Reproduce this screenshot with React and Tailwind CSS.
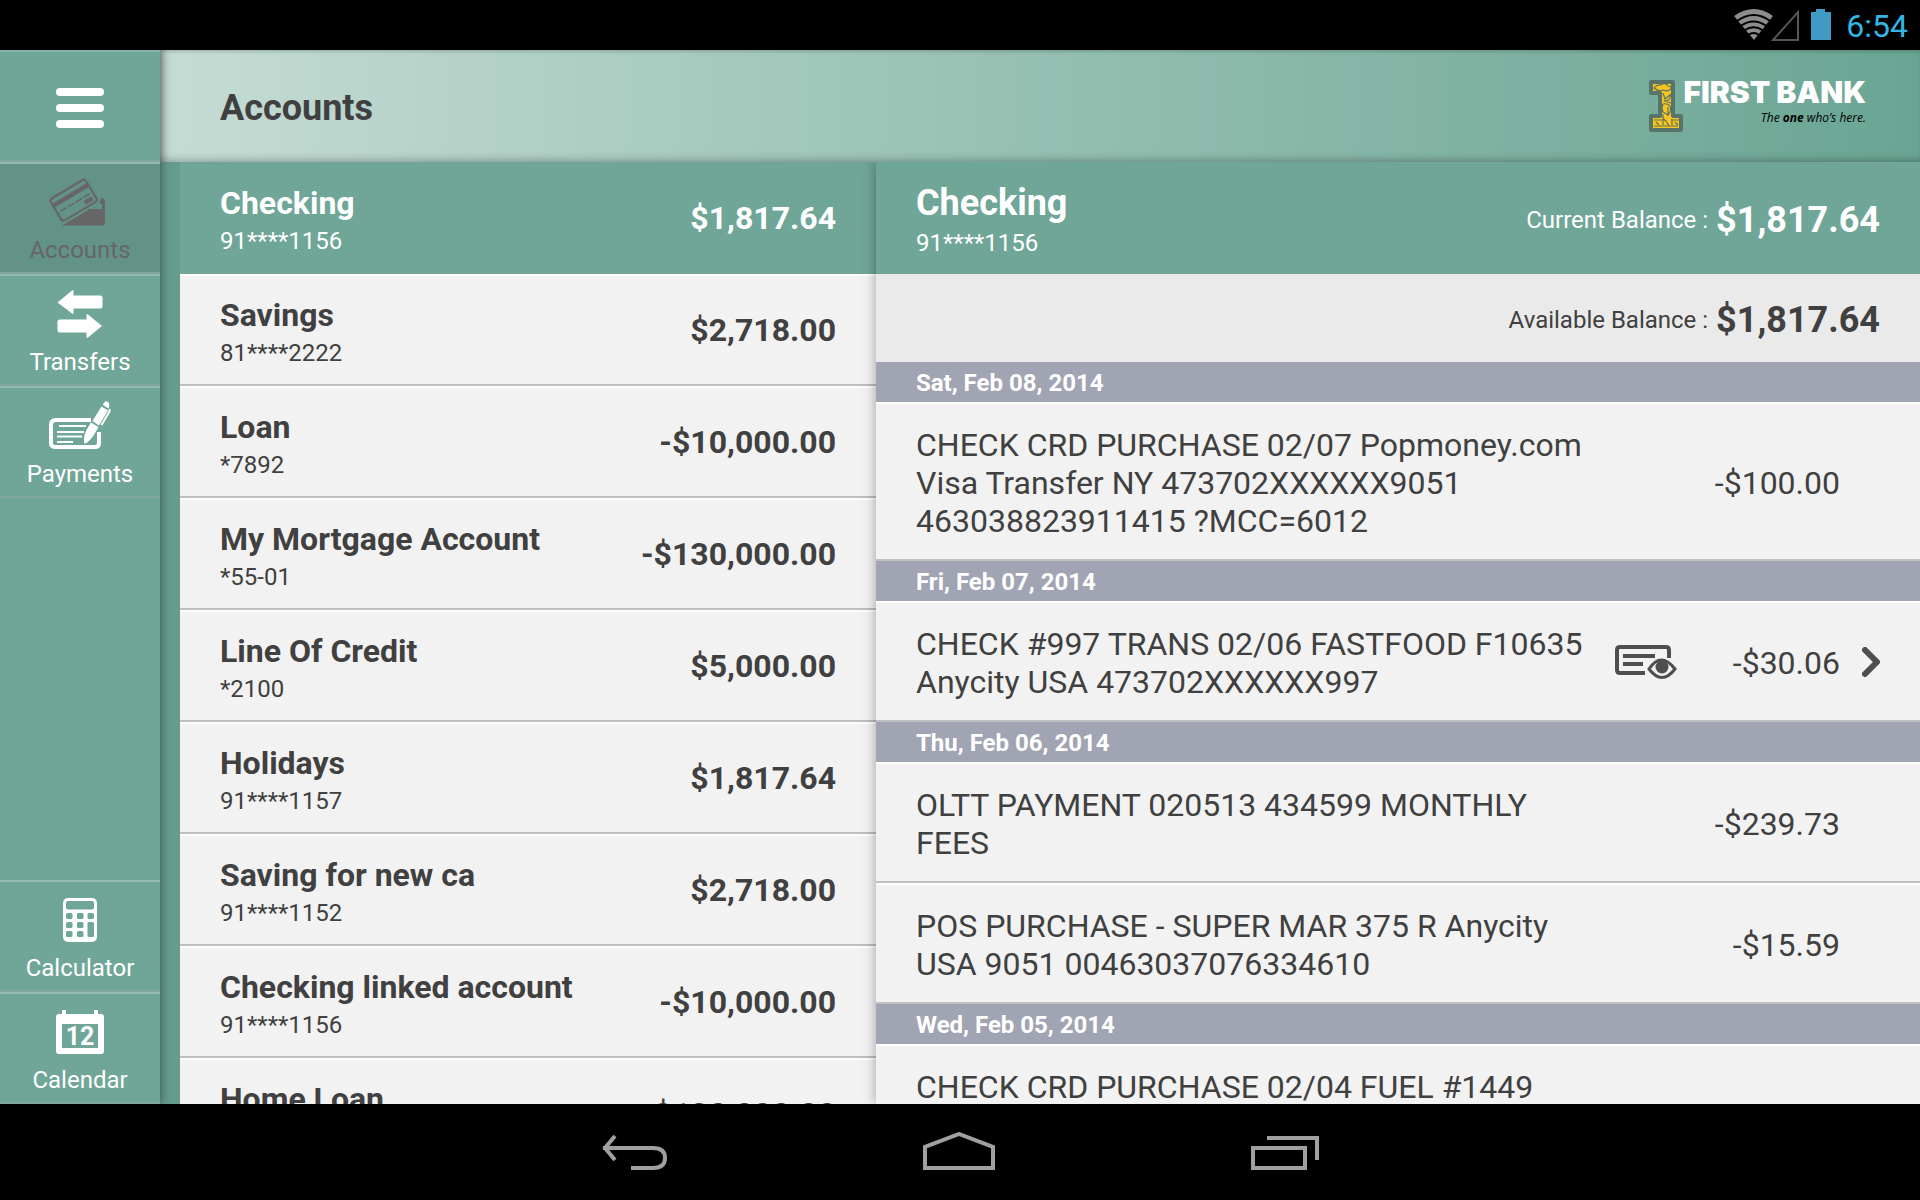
import React from "react";

const accounts = [
  ["Checking", "91****1156", "$1,817.64"],
  ["Savings", "81****2222", "$2,718.00"],
  ["Loan", "*7892", "-$10,000.00"],
  ["My Mortgage Account", "*55-01", "-$130,000.00"],
  ["Line Of Credit", "*2100", "$5,000.00"],
  ["Holidays", "91****1157", "$1,817.64"],
  ["Saving for new ca", "91****1152", "$2,718.00"],
  ["Checking linked account", "91****1156", "-$10,000.00"],
  ["Home Loan", "*55-01", "-$130,000.00"],
];

const days = [
  {
    date: "Sat, Feb 08, 2014",
    items: [
      { lines: ["CHECK CRD PURCHASE 02/07 Popmoney.com", "Visa Transfer NY 473702XXXXXX9051", "463038823911415 ?MCC=6012"], amount: "-$100.00" },
    ],
  },
  {
    date: "Fri, Feb 07, 2014",
    items: [
      { lines: ["CHECK #997 TRANS 02/06 FASTFOOD F10635", "Anycity USA 473702XXXXXX997"], amount: "-$30.06", check: true },
    ],
  },
  {
    date: "Thu, Feb 06, 2014",
    items: [
      { lines: ["OLTT PAYMENT 020513 434599 MONTHLY", "FEES"], amount: "-$239.73" },
      { lines: ["POS PURCHASE - SUPER MAR 375 R Anycity", "USA 9051 00463037076334610"], amount: "-$15.59" },
    ],
  },
  {
    date: "Wed, Feb 05, 2014",
    items: [{ lines: ["CHECK CRD PURCHASE 02/04 FUEL #1449"], amount: "" }],
  },
];

function CardsIcon() {
  return (
    <svg width="62" height="50" viewBox="0 -1 62 50" fill="none" aria-hidden="true">
      <path d="M13 47.500 38 31h15v-4.500L50.500 25l1.500-5q4 0 4 4v20q0 3.500-3.500 3.500z" fill="#666" />
      <g transform="translate(24.500 22) rotate(-31)">
        <rect x="-21" y="-12.500" width="42" height="26" rx="3" fill="#629386" stroke="#629386" strokeWidth="5" />
        <rect x="-20.500" y="-12.500" width="41" height="25.500" rx="3" stroke="#666" strokeWidth="2.200" />
        <path d="M-20-5.500h40" stroke="#666" strokeWidth="4.500" />
        <path d="M-17 3h7m2 0h7m2 0h7m2 0h7" stroke="#666" strokeWidth="1.500" />
        <rect x="8" y="6" width="9" height="4.500" rx="1" fill="#666" />
      </g>
    </svg>
  );
}

function TransfersIcon() {
  return (
    <svg width="46" height="50" viewBox="0 0 46 50" fill="#fff" aria-hidden="true">
      <path d="M.5 13.500 15 1.500q1.500-1 1.500.5v4.500H43q2.500 0 2.500 2.500v8q0 2.500-2.500 2.500H16.500V24q0 1.500-1.500.5L.5 13.500z" />
      <path d="M45 37 31 25.500q-1.500-1-1.500.5v4.500H3Q.5 30.500.5 33v8q0 2.500 2.500 2.500h26.500V48q0 1.500 1.500.5z" />
    </svg>
  );
}

function PaymentsIcon() {
  return (
    <svg width="62" height="50" viewBox="0 0 62 50" fill="none" stroke="#fff" aria-hidden="true">
      <path d="M42 19H7q-5 0-5 5v18q0 4 5 4h39q4 0 4-4V31" strokeWidth="4" />
      <path d="M10 25h27M8 31h27M8 35.500h25M8 41h16" strokeWidth="1.800" />
      <path d="M35 42q-.500-8 3-14l4-6.500 7.500 4.500-4 7q-4 6.500-9 9.500z" fill="#fff" stroke="none" />
      <path d="m43.500 20 9-14.500 6.500 4-9 15z" fill="#fff" stroke="none" />
      <path d="M54 4q1.500-4.500 4.500-3.500 3 2 1 7z" fill="#fff" stroke="none" />
      <path d="m52.500 24 8-13.500V8" strokeWidth="2" />
    </svg>
  );
}

function CalculatorIcon() {
  return (
    <svg width="34" height="44" viewBox="0 0 34 44" aria-hidden="true">
      <rect width="34" height="44" rx="5" fill="#fff" />
      <g fill="#6fa697">
        <rect x="3" y="3" width="28" height="8.500" rx="2" />
        <rect x="3" y="15" width="6.500" height="6" rx="1.500" />
        <rect x="14" y="15" width="6.500" height="6" rx="1.500" />
        <rect x="24.500" y="15" width="6.500" height="6" rx="1.500" />
        <rect x="3" y="24" width="6.500" height="6" rx="1.500" />
        <rect x="14" y="24" width="6.500" height="6" rx="1.500" />
        <rect x="3" y="33" width="6.500" height="6" rx="1.500" />
        <rect x="14" y="33" width="6.500" height="6" rx="1.500" />
        <rect x="24.500" y="24" width="6.500" height="15" rx="1.500" />
      </g>
    </svg>
  );
}

function CalendarIcon() {
  return (
    <svg width="48" height="44" viewBox="0 0 48 44" aria-hidden="true">
      <path d="M6 0h4v4h28V0h4v4h3q3 0 3 3v34q0 3-3 3H3q-3 0-3-3V7q0-3 3-3h3z" fill="#fff" />
      <rect x="6" y="14" width="36" height="24" fill="#6fa697" />
      <text x="24" y="35" textAnchor="middle" fontFamily="Roboto, sans-serif" fontWeight="700" fontSize="25" fill="#fff">12</text>
    </svg>
  );
}

function LogoOne() {
  return (
    <svg width="34" height="52" viewBox="0 0 34 52" aria-hidden="true">
      <path d="M2 2h22v34h8v14H2V36h9V13H2z" fill="#f9c51d" stroke="#57736a" strokeWidth="4" strokeLinejoin="round" />
      <g fill="none" stroke="#5b7465" strokeWidth="1.200">
        <path d="M5 8q3-4 7-3 4-3 7 1 4 0 3 3-4 3-8 1-5 2-9-2zM14 13l2 6 6-5-2 6-5 1 7 2M14 24q-2 4 0 8l5 3q4-4 2-9-3-3-7-2zM14 34q-1 5 3 7l3 5M19 27v9" />
        <path d="M5 40h9M5 46h24M22 40h8M7 42l3 3M26 42l3 3M14 39v6M23 39v6" />
      </g>
    </svg>
  );
}

function CheckViewIcon() {
  return (
    <svg width="62" height="36" viewBox="0 0 62 36" fill="none" stroke="#4e4e50" aria-hidden="true">
      <path d="M54 13V5q0-3-3-3H5Q2 2 2 5v20q0 3 3 3h25" strokeWidth="4" />
      <path d="M8 11h32M8 19h20" strokeWidth="4" />
      <path d="M34 24q12-18 26 0-13 17-26 0z" strokeWidth="3" />
      <circle cx="47" cy="22" r="6.500" fill="#4e4e50" stroke="none" />
    </svg>
  );
}

function NavItem({ icon, label, active }) {
  return (
    <button
      className={
        "flex h-28 w-full flex-col items-center border-t-2 border-b-2 border-t-[#93bdb0] border-b-[#81a79b] pt-3 text-2xl leading-7 " +
        (active ? "bg-[#629386] text-[#666]" : "text-white")
      }
    >
      <span className="flex h-[52px] items-center justify-center">{icon}</span>
      <span className="mt-2">{label}</span>
    </button>
  );
}

function StatusBar() {
  return (
    <div className="flex h-[50px] shrink-0 items-center justify-end bg-black pr-3 text-[#33b5e5]">
      <svg width="98" height="34" viewBox="0 0 98 34" aria-hidden="true">
        <path d="M0 8Q20-6 39 8L20 32z" fill="#8c8c8c" />
        <path d="M3 13q17-12 33 0M6.500 18q13-9 26 0M10 22.500q10-6.500 19 0M14 27q6-4 11 0" fill="none" stroke="#000" strokeWidth="2" />
        <path d="M39 32 64 4v28z" fill="none" stroke="#555" strokeWidth="2" />
        <path d="M77 4h5V1h9v3h6v28H77z" fill="#3f9bc4" />
      </svg>
      <span className="ml-3.5 pt-0.5 text-[32px] leading-10">6:54</span>
    </div>
  );
}

function SystemBar() {
  return (
    <div className="flex h-24 shrink-0 items-center justify-center gap-64 bg-black pb-0.5">
      <button aria-label="Back">
        <svg width="66" height="38" viewBox="0 -4 66 38" fill="none" stroke="#a0a0a0" strokeWidth="4" aria-hidden="true">
          <path d="M2 12h50q12 0 12 10 0 10-12 10H30" />
          <path d="M14 0 4 12 14 24" />
        </svg>
      </button>
      <button aria-label="Home">
        <svg width="72" height="38" viewBox="0 0 72 38" fill="none" stroke="#a0a0a0" strokeWidth="4" aria-hidden="true">
          <path d="M2 36V15L36 2l34 13v21z" />
        </svg>
      </button>
      <button aria-label="Recent apps">
        <svg width="68" height="38" viewBox="0 -4 68 38" fill="none" stroke="#a0a0a0" strokeWidth="4" aria-hidden="true">
          <path d="M2 12h52v20H2zM16 2h50v22" />
        </svg>
      </button>
    </div>
  );
}

function Header() {
  return (
    <header className="flex h-28 shrink-0 items-center justify-between bg-linear-to-r from-[#c5dcd5] via-[#95bfb2] to-[#6aa593] pr-[54px] pl-[60px] shadow-[inset_0_-8px_8px_-6px_rgba(0,0,0,0.25),inset_8px_0_8px_-6px_rgba(0,0,0,0.25),inset_0_4px_4px_-3px_rgba(0,0,0,0.2)]">
      <h1 className="pt-1 text-4xl leading-10 font-bold">Accounts</h1>
      <div className="flex items-start">
        <LogoOne />
        <div className="flex flex-col items-end">
          <span className="font-[Inter] text-[30px] leading-6 font-black text-white">FIRST BANK</span>
          <span className="mt-1 font-['Open_Sans'] text-xs leading-5 text-black italic">
            The <b>one</b> who’s here.
          </span>
        </div>
      </div>
    </header>
  );
}

function AccountList() {
  return (
    <ul className="flex-2 overflow-hidden">
      {accounts.map(([name, number, amount], i) => (
        <li key={i}>
          <button
            className={
              "flex h-28 w-full items-center justify-between border-t-2 border-b-2 px-10 text-left " +
              (i === 0 ? "border-[#6fa697] bg-[#6fa697] text-white" : "border-t-white border-b-[#bdbdbd] bg-[#f2f2f2]")
            }
          >
            <span className="flex flex-col pt-1.5">
              <span className="text-[32px] leading-10 font-bold">{name}</span>
              <span className="text-2xl leading-9">{number}</span>
            </span>
            <span className="text-[32px] leading-10 font-bold">{amount}</span>
          </button>
        </li>
      ))}
    </ul>
  );
}

function Transaction({ lines, amount, check }) {
  return (
    <li className="flex items-center border-t-2 border-b-2 border-t-white border-b-[#bfc1c1] bg-[#f2f2f2] pt-[22px] pr-10 pb-[19px] pl-10 text-[32px] leading-[38px]">
      <p className="flex-1 whitespace-nowrap">
        {lines.map((l) => (
          <span key={l} className="block">{l}</span>
        ))}
      </p>
      {check && (
        <button aria-label="View check image">
          <CheckViewIcon />
        </button>
      )}
      <span className="w-[163px] text-right">{amount}</span>
      <span className="flex w-10 justify-end">
        {check && (
          <svg width="18" height="32" viewBox="0 0 18 32" fill="none" stroke="#4e4e50" strokeWidth="6" strokeLinecap="round" strokeLinejoin="round" aria-hidden="true">
            <path d="m3 3 12 12L3 27" />
          </svg>
        )}
      </span>
    </li>
  );
}

function Balance({ label, amount }) {
  return (
    <p className="flex items-center gap-2 pt-1">
      <span className="text-2xl leading-8">{label} :</span>
      <span className="text-4xl leading-10 font-bold">{amount}</span>
    </p>
  );
}

function Detail() {
  return (
    <section className="relative flex-3 shadow-[0_0_12px_rgba(0,0,0,0.35)]">
      <div className="h-full overflow-hidden bg-[#f2f2f2]">
        <div className="flex h-28 items-center justify-between bg-[#6fa697] px-10 text-white">
          <div className="pt-2.5">
            <h2 className="text-4xl leading-10 font-bold">Checking</h2>
            <p className="text-2xl leading-10">91****1156</p>
          </div>
          <Balance label="Current Balance" amount="$1,817.64" />
        </div>
        <div className="flex h-[88px] items-center justify-end bg-[#eaeaea] px-10">
          <Balance label="Available Balance" amount="$1,817.64" />
        </div>
        {days.map((d) => (
          <div key={d.date}>
            <h3 className="h-10 bg-[#a1a4b3] pt-px pl-10 text-2xl leading-10 font-bold text-white">{d.date}</h3>
            <ul>
              {d.items.map((t) => (
                <Transaction key={t.lines[0]} {...t} />
              ))}
            </ul>
          </div>
        ))}
      </div>
    </section>
  );
}

export default function App() {
  return (
    <div className="flex h-screen flex-col overflow-hidden bg-black font-[Roboto,sans-serif] text-[#404040]">
      <StatusBar />
      <div className="flex min-h-0 flex-1">
        <nav className="relative z-10 flex w-40 shrink-0 flex-col bg-[#6fa697] shadow-[0_0_10px_rgba(0,0,0,0.5)]">
          <button aria-label="Menu" className="flex h-28 shrink-0 items-center justify-center border-t-2 border-b-2 border-t-[#8ab3a7] border-b-[#81a79b] pt-1">
            <span className="flex flex-col gap-2">
              <span className="h-2 w-12 rounded-full bg-white" />
              <span className="h-2 w-12 rounded-full bg-white" />
              <span className="h-2 w-12 rounded-full bg-white" />
            </span>
          </button>
          <NavItem active label="Accounts" icon={<CardsIcon />} />
          <NavItem label="Transfers" icon={<TransfersIcon />} />
          <NavItem label="Payments" icon={<PaymentsIcon />} />
          <div className="flex-1" />
          <NavItem label="Calculator" icon={<CalculatorIcon />} />
          <NavItem label="Calendar" icon={<CalendarIcon />} />
        </nav>
        <div className="flex min-w-0 flex-1 flex-col">
          <Header />
          <main className="flex min-h-0 flex-1 overflow-hidden bg-[#669c8d] pl-5">
            <AccountList />
            <Detail />
          </main>
        </div>
      </div>
      <SystemBar />
    </div>
  );
}
